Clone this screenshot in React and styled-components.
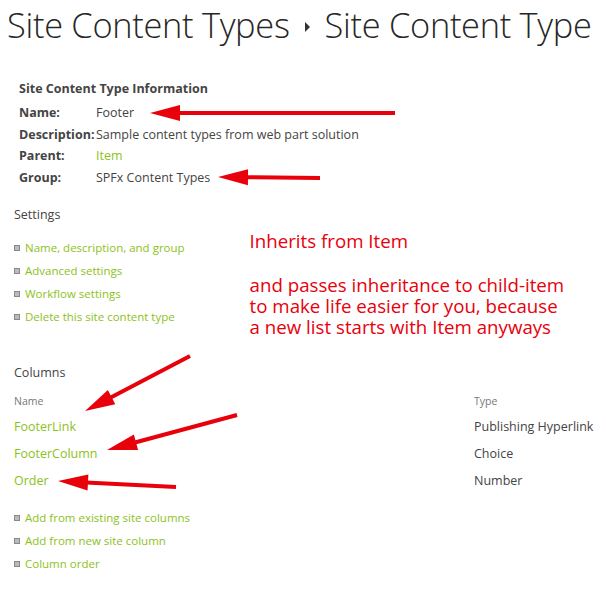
import React from 'react'
import styled, { createGlobalStyle } from 'styled-components'

const GlobalStyle = createGlobalStyle`
  body {
    margin: 0;
    background: #fff;
    font-family: "Open Sans", "Noto Sans", sans-serif;
    color: #444;
  }
`

const Page = styled.div`
  position: relative;
  width: 606px;
  height: 614px;
  overflow: hidden;
`

const Title = styled.h1`
  margin: 0;
  padding: 0 0 0 7px;
  height: 48px;
  box-sizing: border-box;
  display: flex;
  align-items: center;
  gap: 15px;
  font-weight: 300;
  font-size: 34.4px;
  color: #262626;
  white-space: nowrap;
  letter-spacing: -0.3px;
`

const Crumb = styled.span`
  width: 0;
  height: 0;
  border-top: 5px solid transparent;
  border-bottom: 5px solid transparent;
  border-left: 5px solid #333;
  margin-top: 6px;
`

const Info = styled.section`
  padding: 32px 0 0 19px;
`

const InfoHeading = styled.div`
  font-weight: 700;
  font-size: 12.5px;
  margin-bottom: 5px;
`

const InfoRow = styled.div`
  display: grid;
  grid-template-columns: 77px 1fr;
  height: 21.5px;
  align-items: center;
  font-size: 12.5px;
`

const Label = styled.span`
  font-weight: 700;
`

const Value = styled.span`
  color: ${p => (p.$link ? '#8cc21a' : '#444')};
`

const SectionTitle = styled.div`
  padding-left: 14px;
  font-size: 12.5px;
  margin-top: ${p => p.$top}px;
`

const LinkList = styled.ul`
  list-style: none;
  margin: ${p => p.$top}px 0 0;
  padding: 0 0 0 14px;
`

const LinkItem = styled.li`
  display: flex;
  align-items: center;
  height: 23px;
  font-size: 11.5px;
  color: #8cc21a;
  white-space: nowrap;

  &::before {
    content: '';
    width: 4px;
    height: 4px;
    border: 1px solid #888;
    background: #bbb;
    margin-right: 5px;
  }
`

const Middle = styled.div`
  display: flex;
  align-items: flex-start;
`

const Note = styled.div`
  margin: 7px 0 0 65px;
  color: #e8000b;
  font-size: 18.7px;
  font-weight: 500;
  white-space: nowrap;
`

const NoteLine = styled.div`
  height: 21px;
  line-height: 21px;
  margin-bottom: ${p => (p.$gap ? 23 : 0)}px;
`

const Table = styled.div`
  padding-left: 14px;
  margin-top: 8px;
`

const TableRow = styled.div`
  display: grid;
  grid-template-columns: 460px 1fr;
  align-items: center;
  height: ${p => (p.$head ? 24 : 27)}px;
  font-size: ${p => (p.$head ? 10.5 : 12.5)}px;
  color: ${p => (p.$head ? '#777' : '#444')};
`

const ColName = styled.span`
  color: ${p => (p.$link ? '#8cc21a' : 'inherit')};
`

const Arrows = styled.svg`
  position: absolute;
  left: 0;
  top: 0;
  pointer-events: none;
`

const arrowList = [
  [395, 113, 150, 113],
  [320, 178, 218, 177],
  [190, 356, 85, 411],
  [237, 415, 107, 450],
  [176, 487, 58, 481],
]

function Arrow({ x1, y1, x2, y2 }) {
  const dx = x2 - x1
  const dy = y2 - y1
  const len = Math.sqrt(dx * dx + dy * dy)
  const ux = dx / len
  const uy = dy / len
  const head = 30
  const w = 8
  const bx = x2 - ux * head
  const by = y2 - uy * head
  const pts = `${x2},${y2} ${bx - uy * w},${by + ux * w} ${bx + uy * w},${by - ux * w}`
  return (
    <g>
      <line x1={x1} y1={y1} x2={bx + ux * 2} y2={by + uy * 2} stroke="#e8000b" strokeWidth="4" />
      <polygon points={pts} fill="#e8000b" />
    </g>
  )
}

export default function App() {
  return (
    <Page>
      <GlobalStyle />
      <Title>
        Site Content Types <Crumb /> Site Content Type
      </Title>

      <Info>
        <InfoHeading>Site Content Type Information</InfoHeading>
        <InfoRow><Label>Name:</Label><Value>Footer</Value></InfoRow>
        <InfoRow><Label>Description:</Label><Value>Sample content types from web part solution</Value></InfoRow>
        <InfoRow><Label>Parent:</Label><Value $link>Item</Value></InfoRow>
        <InfoRow><Label>Group:</Label><Value>SPFx Content Types</Value></InfoRow>
      </Info>

      <SectionTitle $top={18}>Settings</SectionTitle>
      <Middle>
        <LinkList $top={13}>
          <LinkItem>Name, description, and group</LinkItem>
          <LinkItem>Advanced settings</LinkItem>
          <LinkItem>Workflow settings</LinkItem>
          <LinkItem>Delete this site content type</LinkItem>
        </LinkList>
        <Note>
          <NoteLine $gap>Inherits from Item</NoteLine>
          <NoteLine>and passes inheritance to child-item</NoteLine>
          <NoteLine>to make life easier for you, because</NoteLine>
          <NoteLine>a new list starts with Item anyways</NoteLine>
        </Note>
      </Middle>

      <SectionTitle $top={27}>Columns</SectionTitle>
      <Table>
        <TableRow $head><span>Name</span><span>Type</span></TableRow>
        <TableRow><ColName $link>FooterLink</ColName><span>Publishing Hyperlink</span></TableRow>
        <TableRow><ColName $link>FooterColumn</ColName><span>Choice</span></TableRow>
        <TableRow><ColName $link>Order</ColName><span>Number</span></TableRow>
      </Table>

      <LinkList $top={12}>
        <LinkItem>Add from existing site columns</LinkItem>
        <LinkItem>Add from new site column</LinkItem>
        <LinkItem>Column order</LinkItem>
      </LinkList>

      <Arrows width="606" height="614">
        {arrowList.map(([x1, y1, x2, y2], i) => (
          <Arrow key={i} x1={x1} y1={y1} x2={x2} y2={y2} />
        ))}
      </Arrows>
    </Page>
  )
}
